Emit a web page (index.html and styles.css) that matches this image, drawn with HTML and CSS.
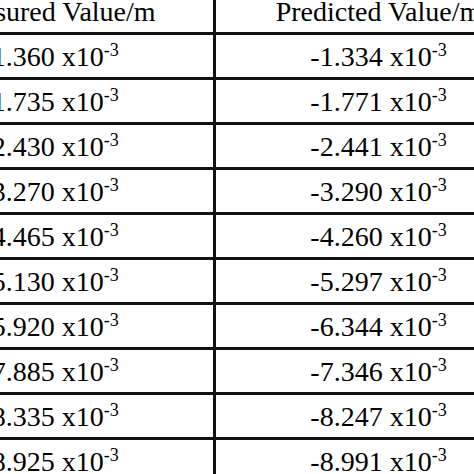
FILE: index.html
```html
<!DOCTYPE html>
<html>
<head>
<meta charset="utf-8">
<link rel="stylesheet" href="styles.css">
</head>
<body>
<div class="table">
  <div class="cell">Measured Value/m</div>
  <div class="cell">Predicted Value/m</div>
  <div class="cell">-1.360 x10<sup>-3</sup></div>
  <div class="cell">-1.334 x10<sup>-3</sup></div>
  <div class="cell">-1.735 x10<sup>-3</sup></div>
  <div class="cell">-1.771 x10<sup>-3</sup></div>
  <div class="cell">-2.430 x10<sup>-3</sup></div>
  <div class="cell">-2.441 x10<sup>-3</sup></div>
  <div class="cell">-3.270 x10<sup>-3</sup></div>
  <div class="cell">-3.290 x10<sup>-3</sup></div>
  <div class="cell">-4.465 x10<sup>-3</sup></div>
  <div class="cell">-4.260 x10<sup>-3</sup></div>
  <div class="cell">-5.130 x10<sup>-3</sup></div>
  <div class="cell">-5.297 x10<sup>-3</sup></div>
  <div class="cell">-5.920 x10<sup>-3</sup></div>
  <div class="cell">-6.344 x10<sup>-3</sup></div>
  <div class="cell">-7.885 x10<sup>-3</sup></div>
  <div class="cell">-7.346 x10<sup>-3</sup></div>
  <div class="cell">-8.335 x10<sup>-3</sup></div>
  <div class="cell">-8.247 x10<sup>-3</sup></div>
  <div class="cell">-8.925 x10<sup>-3</sup></div>
  <div class="cell">-8.991 x10<sup>-3</sup></div>
</div>
</body>
</html>
```
FILE: styles.css
```css
html, body {
  margin: 0;
  padding: 0;
  background: #fff;
  overflow: hidden;
  width: 474px;
  height: 474px;
}
.table {
  display: grid;
  grid-template-columns: 325px 325px;
  grid-auto-rows: 42px;
  gap: 3px;
  padding: 3px;
  background: #111;
  width: max-content;
  margin: -13px 0 0 -115px;
}
.cell {
  background: #fff;
  display: block;
  text-align: center;
  padding-top: 2px;
  line-height: 40px;
  box-sizing: border-box;
  font-family: "Liberation Serif", "Times New Roman", serif;
  font-size: 28px;
  color: #000;
  white-space: nowrap;
}
.cell sup {
  font-size: 18px;
  line-height: 0;
  vertical-align: 10px;
}
```
